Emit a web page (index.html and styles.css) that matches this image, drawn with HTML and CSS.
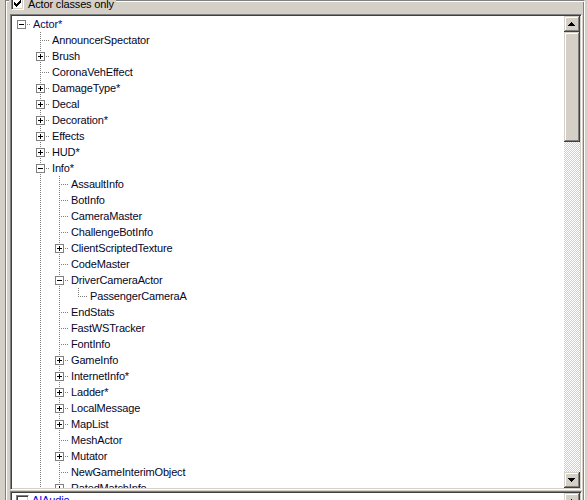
FILE: index.html
```html
<!DOCTYPE html>
<html lang="en">
<head>
  <meta charset="UTF-8">
  <meta name="viewport" content="width=device-width, initial-scale=1.0">
  <title>Actor Classes</title>

  <link rel="stylesheet" href="styles.css">
</head>
<body>
  <div class="group">
    <div class="caption">
      <span class="check">
        <svg class="tick" width="7" height="7" viewBox="0 0 7 7"><path d="M6 0h1v1H6zM5 1h2v1H5zM0 2h1v1H0zM4 2h3v1H4zM0 3h2v1H0zM3 3h3v1H3zM0 4h5v1H0zM1 5h3v1H1zM2 6h1v1H2z"/></svg>
      </span>
      <span class="caption-text">Actor classes only</span>
    </div>

    <!-- class tree -->
    <div class="box tree-box">
      <div class="tree">
        <div class="row"><span class="twig root"><i class="exp minus"></i></span><span class="name actor">Actor*</span></div>
        <div class="row"><i class="gap"></i><span class="twig"></span><span class="name">AnnouncerSpectator</span></div>
        <div class="row"><i class="gap"></i><span class="twig"><i class="exp plus"></i></span><span class="name">Brush</span></div>
        <div class="row"><i class="gap"></i><span class="twig"></span><span class="name">CoronaVehEffect</span></div>
        <div class="row"><i class="gap"></i><span class="twig"><i class="exp plus"></i></span><span class="name">DamageType*</span></div>
        <div class="row"><i class="gap"></i><span class="twig"><i class="exp plus"></i></span><span class="name">Decal</span></div>
        <div class="row"><i class="gap"></i><span class="twig"><i class="exp plus"></i></span><span class="name">Decoration*</span></div>
        <div class="row"><i class="gap"></i><span class="twig"><i class="exp plus"></i></span><span class="name">Effects</span></div>
        <div class="row"><i class="gap"></i><span class="twig"><i class="exp plus"></i></span><span class="name">HUD*</span></div>
        <div class="row"><i class="gap"></i><span class="twig"><i class="exp minus"></i></span><span class="name">Info*</span></div>
        <div class="row"><i class="gap"></i><i class="pipe"></i><span class="twig"></span><span class="name">AssaultInfo</span></div>
        <div class="row"><i class="gap"></i><i class="pipe"></i><span class="twig"></span><span class="name">BotInfo</span></div>
        <div class="row"><i class="gap"></i><i class="pipe"></i><span class="twig"></span><span class="name">CameraMaster</span></div>
        <div class="row"><i class="gap"></i><i class="pipe"></i><span class="twig"></span><span class="name">ChallengeBotInfo</span></div>
        <div class="row"><i class="gap"></i><i class="pipe"></i><span class="twig"><i class="exp plus"></i></span><span class="name">ClientScriptedTexture</span></div>
        <div class="row"><i class="gap"></i><i class="pipe"></i><span class="twig"></span><span class="name">CodeMaster</span></div>
        <div class="row"><i class="gap"></i><i class="pipe"></i><span class="twig"><i class="exp minus"></i></span><span class="name">DriverCameraActor</span></div>
        <div class="row"><i class="gap"></i><i class="pipe"></i><i class="pipe"></i><span class="twig last"></span><span class="name">PassengerCameraA</span></div>
        <div class="row"><i class="gap"></i><i class="pipe"></i><span class="twig"></span><span class="name">EndStats</span></div>
        <div class="row"><i class="gap"></i><i class="pipe"></i><span class="twig"></span><span class="name">FastWSTracker</span></div>
        <div class="row"><i class="gap"></i><i class="pipe"></i><span class="twig"></span><span class="name">FontInfo</span></div>
        <div class="row"><i class="gap"></i><i class="pipe"></i><span class="twig"><i class="exp plus"></i></span><span class="name">GameInfo</span></div>
        <div class="row"><i class="gap"></i><i class="pipe"></i><span class="twig"><i class="exp plus"></i></span><span class="name">InternetInfo*</span></div>
        <div class="row"><i class="gap"></i><i class="pipe"></i><span class="twig"><i class="exp plus"></i></span><span class="name">Ladder*</span></div>
        <div class="row"><i class="gap"></i><i class="pipe"></i><span class="twig"><i class="exp plus"></i></span><span class="name">LocalMessage</span></div>
        <div class="row"><i class="gap"></i><i class="pipe"></i><span class="twig"><i class="exp plus"></i></span><span class="name">MapList</span></div>
        <div class="row"><i class="gap"></i><i class="pipe"></i><span class="twig"></span><span class="name">MeshActor</span></div>
        <div class="row"><i class="gap"></i><i class="pipe"></i><span class="twig"><i class="exp plus"></i></span><span class="name">Mutator</span></div>
        <div class="row"><i class="gap"></i><i class="pipe"></i><span class="twig"></span><span class="name">NewGameInterimObject</span></div>
        <div class="row"><i class="gap"></i><i class="pipe"></i><span class="twig"><i class="exp plus"></i></span><span class="name">RatedMatchInfo</span></div>
      </div>

      <div class="scrollbar">
        <div class="sb-btn">
          <svg width="16" height="16" viewBox="0 0 16 16"><path d="M7 6h1v1h1v1h1v1h1v1H4V9h1V8h1V7h1z"/></svg>
        </div>
        <div class="sb-thumb"></div>
        <div class="sb-track"></div>
        <div class="sb-btn">
          <svg width="16" height="16" viewBox="0 0 16 16"><path d="M4 6h7v1h-1v1H9v1H8v1H7V9H6V8H5V7H4z"/></svg>
        </div>
      </div>
    </div>

    <!-- package list -->
    <div class="box pkg-box">
      <div class="pkg-list">
        <div class="pkg-row"><span class="check"></span><span class="pkg-name">AIAudio</span></div>
      </div>
      <div class="scrollbar">
        <div class="sb-btn">
          <svg width="16" height="16" viewBox="0 0 16 16"><path d="M7 6h1v1h1v1h1v1h1v1H4V9h1V8h1V7h1z"/></svg>
        </div>
        <div class="sb-track"></div>
      </div>
    </div>
  </div>
</body>
</html>
```

FILE: styles.css
```css
* {
  margin: 0;
  padding: 0;
  box-sizing: border-box;
}

body {
  font-family: "Liberation Sans", Arial, sans-serif;
  font-size: 11px;
  color: #000;
  background-color: #d4d0c8;
  height: 500px;
  overflow: hidden;
}

/* group frame (etched line) */
.group {
  display: flex;
  flex-direction: column;
  align-items: flex-start;
  margin-left: 5px;
  width: 580px;
  height: 520px;
  border-top: 1px solid #808080;
  border-left: 1px solid #808080;
  border-right: 1px solid #fff;
  box-shadow: inset 1px 1px #fff, inset -1px 0 #808080;
}

.caption {
  display: flex;
  align-items: flex-start;
  gap: 4px;
  height: 13px;
  margin: -4px 0 0 3px;
  padding: 0 2px;
  background-color: #d4d0c8;
}

.caption-text {
  line-height: 13px;
  padding-top: 1px;
  letter-spacing: -0.15px;
  white-space: nowrap;
}

.check {
  display: flex;
  flex: none;
  width: 13px;
  height: 13px;
  background-color: #fff;
  border: 1px solid;
  border-color: #808080 #fff #fff #808080;
  box-shadow: inset 1px 1px #404040, inset -1px -1px #d4d0c8;
}

.tick {
  margin: 2px 0 0 2px;
  fill: #000;
}

/* sunken box */
.box {
  display: flex;
  margin-left: 4px;
  width: 572px;
  padding: 1px;
  background-color: #fff;
  border: 1px solid;
  border-color: #808080 #fff #fff #808080;
  box-shadow: inset 1px 1px #404040, inset -1px -1px #d4d0c8;
}

.tree-box {
  margin-top: 4px;
  height: 476px;
}

.tree {
  flex: 1;
  overflow: hidden;
}

.row {
  display: flex;
  height: 16px;
  line-height: 16px;
  white-space: nowrap;
}

.gap,
.pipe,
.twig {
  flex: none;
  width: 19px;
  height: 16px;
}

.pipe {
  background: repeating-linear-gradient(#808080 0 1px, transparent 1px 2px) 9px 0 / 1px 16px no-repeat;
}

.twig {
  padding: 4px 0 0 5px;
  background:
    repeating-linear-gradient(90deg, #808080 0 1px, transparent 1px 2px) 9px 8px / 10px 1px no-repeat,
    repeating-linear-gradient(#808080 0 1px, transparent 1px 2px) 9px 0 / 1px 16px no-repeat;
}

.twig.last {
  background-size: 10px 1px, 1px 9px;
}

.twig.root {
  background: repeating-linear-gradient(90deg, #808080 0 1px, transparent 1px 2px) 9px 8px / 10px 1px no-repeat;
}

/* expand / collapse box */
.exp {
  display: block;
  width: 9px;
  height: 9px;
  border: 1px solid #808080;
  background-color: #fff;
}

.exp.minus {
  background: linear-gradient(#000, #000) 1px 3px / 5px 1px no-repeat, #fff;
}

.exp.plus {
  background:
    linear-gradient(#000, #000) 1px 3px / 5px 1px no-repeat,
    linear-gradient(#000, #000) 3px 1px / 1px 5px no-repeat,
    #fff;
}

.name {
  padding-left: 2px;
  color: #060628;
  letter-spacing: -0.15px;
}

.name.actor {
  color: #0c0c5c;
}

/* scrollbar */
.scrollbar {
  display: flex;
  flex-direction: column;
  flex: none;
  width: 16px;
}

.sb-btn,
.sb-thumb {
  flex: none;
  background-color: #d4d0c8;
  box-shadow: inset -1px -1px #404040, inset 1px 1px #d4d0c8, inset -2px -2px #808080, inset 2px 2px #fff;
}

.sb-btn {
  height: 16px;
}

.sb-btn svg {
  display: block;
  fill: #000;
}

.sb-thumb {
  height: 110px;
}

.sb-track {
  flex: 1;
  background: repeating-conic-gradient(#d4d0c8 0 25%, #fff 0 50%) 0 0 / 2px 2px;
}

/* package list */
.pkg-box {
  margin-top: 1px;
  height: 40px;
}

.pkg-list {
  flex: 1;
  overflow: hidden;
}

.pkg-row {
  display: flex;
  align-items: flex-start;
  gap: 3px;
  padding: 2px 0 0 4px;
}

.pkg-name {
  margin-top: -1px;
  line-height: 13px;
  color: #0000e0;
  letter-spacing: -0.15px;
}
```
